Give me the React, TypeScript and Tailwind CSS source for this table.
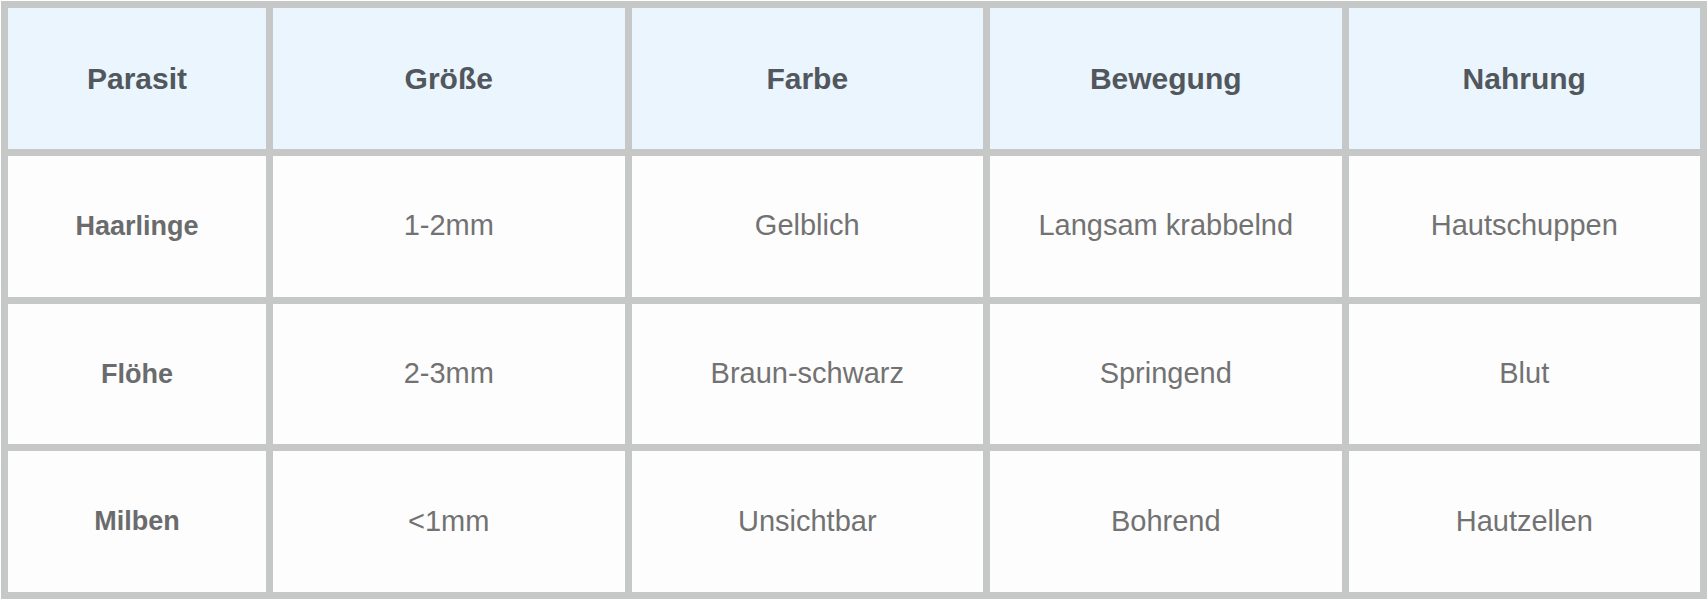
import React from 'react'

const headers = ['Parasit', 'Größe', 'Farbe', 'Bewegung', 'Nahrung']

const rows = [
  ['Haarlinge', '1-2mm', 'Gelblich', 'Langsam krabbelnd', 'Hautschuppen'],
  ['Flöhe', '2-3mm', 'Braun-schwarz', 'Springend', 'Blut'],
  ['Milben', '<1mm', 'Unsichtbar', 'Bohrend', 'Hautzellen'],
]

const App = (): JSX.Element => {
  return (
    <div className="w-[1708px] h-[600px] bg-white p-px" style={{ fontFamily: '"Liberation Sans", Arial, sans-serif' }}>
      <div className="grid grid-cols-[258px_repeat(4,1fr)] grid-rows-4 gap-[7px] p-[7px] w-[1706px] h-[598px] bg-[#c6c8c8]">
        {/* Header row */}
        {headers.map((h) => (
          <div key={h} className="flex items-center justify-center bg-[#eaf5fe] text-[30px] font-bold text-[#51575c]">
            {h}
          </div>
        ))}
        {/* Body rows */}
        {rows.map((row) =>
          row.map((cell, i) => (
            <div
              key={row[0] + i}
              className={
                i === 0
                  ? 'flex items-center justify-center bg-[#fdfdfd] text-[27px] font-bold text-[#6a6b6c]'
                  : 'flex items-center justify-center bg-[#fdfdfd] text-[29px] text-[#727272]'
              }
            >
              {cell}
            </div>
          ))
        )}
      </div>
    </div>
  )
}

export default App
